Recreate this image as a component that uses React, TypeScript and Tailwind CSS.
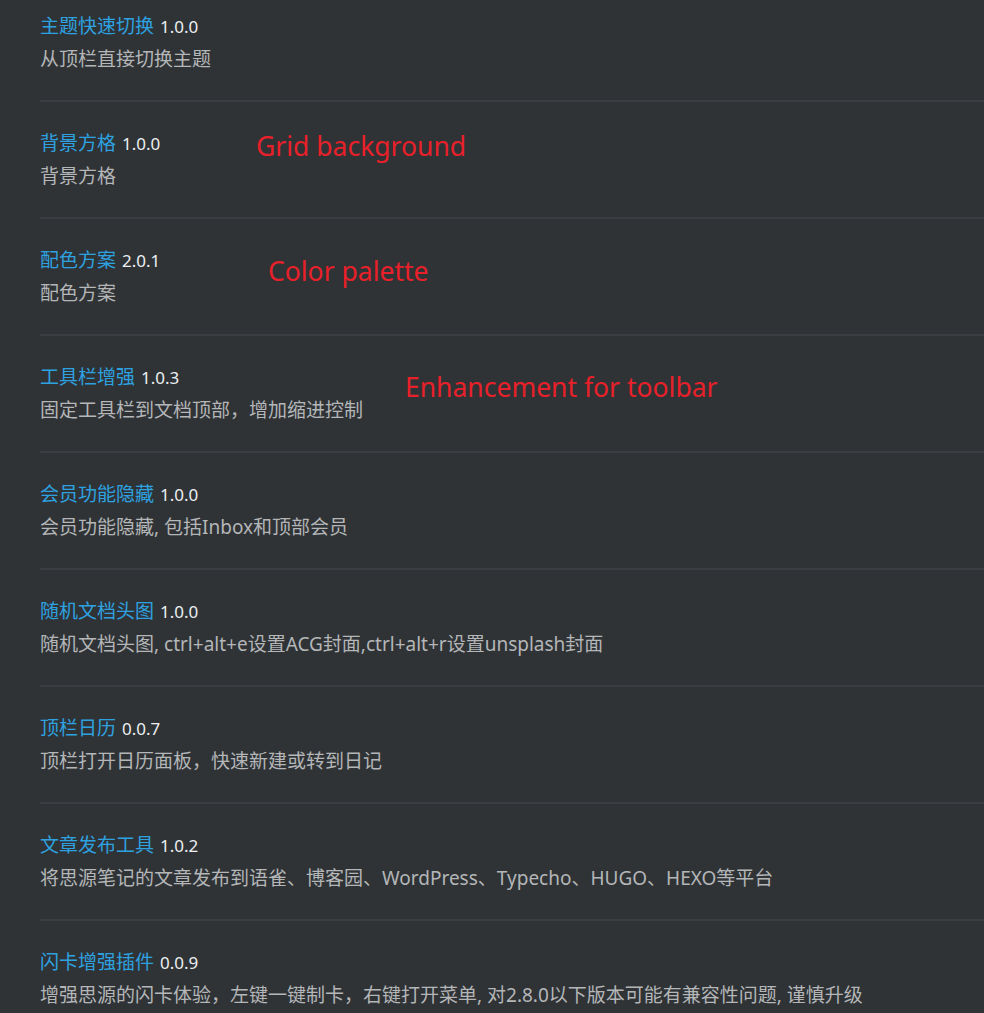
import React from 'react';

type Plugin = {
  name: string;
  version: string;
  desc: string;
  note?: { text: string; pos: string };
};

const plugins: Plugin[] = [
  { name: '主题快速切换', version: '1.0.0', desc: '从顶栏直接切换主题' },
  { name: '背景方格', version: '1.0.0', desc: '背景方格', note: { text: 'Grid background', pos: 'left-[216px] top-[18px]' } },
  { name: '配色方案', version: '2.0.1', desc: '配色方案', note: { text: 'Color palette', pos: 'left-[228px] top-[26px]' } },
  {
    name: '工具栏增强',
    version: '1.0.3',
    desc: '固定工具栏到文档顶部，增加缩进控制',
    note: { text: 'Enhancement for toolbar', pos: 'left-[365px] top-[25px]' },
  },
  { name: '会员功能隐藏', version: '1.0.0', desc: '会员功能隐藏, 包括Inbox和顶部会员' },
  {
    name: '随机文档头图',
    version: '1.0.0',
    desc: '随机文档头图, ctrl+alt+e设置ACG封面,ctrl+alt+r设置unsplash封面',
  },
  { name: '顶栏日历', version: '0.0.7', desc: '顶栏打开日历面板，快速新建或转到日记' },
  {
    name: '文章发布工具',
    version: '1.0.2',
    desc: '将思源笔记的文章发布到语雀、博客园、WordPress、Typecho、HUGO、HEXO等平台',
  },
  {
    name: '闪卡增强插件',
    version: '0.0.9',
    desc: '增强思源的闪卡体验，左键一键制卡，右键打开菜单, 对2.8.0以下版本可能有兼容性问题, 谨慎升级',
  },
];

const font = { fontFamily: '"Noto Sans", "Noto Sans CJK SC", sans-serif' };

const PluginRow = ({ plugin, first }: { plugin: Plugin; first: boolean }) => (
  <div
    className={`relative border-b-2 border-[#3a3e42] ${first ? 'pt-[10px]' : 'pt-[25px]'} pb-[24px]`}
  >
    <div className="h-[33px] text-[19px] leading-[33px] whitespace-nowrap">
      <span className="text-[#2ea2e0]">{plugin.name}</span>
      <span className="ml-[6px] text-[17px] leading-none text-[#eceff1]">{plugin.version}</span>
    </div>
    <div className="h-[33px] text-[19px] leading-[33px] text-[#b4b6b8] whitespace-nowrap">{plugin.desc}</div>
    {plugin.note && (
      <div
        className={`absolute ${plugin.note.pos} text-[26.5px] leading-[52px] text-[#e8202a] whitespace-nowrap`}
      >
        {plugin.note.text}
      </div>
    )}
  </div>
);

export default function App() {
  return (
    <div className="h-[1013px] w-[984px] overflow-hidden bg-[#2f3336] pl-[40px]" style={font}>
      {plugins.map((p, i) => (
        <PluginRow key={p.name} plugin={p} first={i === 0} />
      ))}
    </div>
  );
}
